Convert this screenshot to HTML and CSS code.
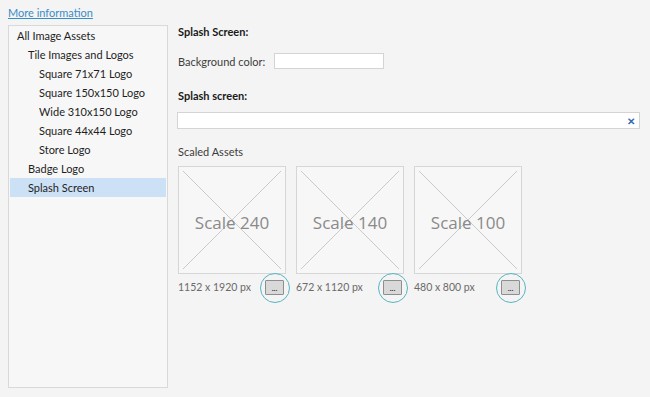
FILE: index.html
```html
<!DOCTYPE html>
<html lang="en">
<head>
    <meta charset="UTF-8">
    <title>Image Assets</title>
    <link rel="stylesheet" href="styles.css">
</head>
<body>
    <a class="moreLink" href="#">More information</a>
    <div class="layout">
        <ul class="tree">
            <li class="lv0">All Image Assets</li>
            <li class="lv1">Tile Images and Logos</li>
            <li class="lv2">Square 71x71 Logo</li>
            <li class="lv2">Square 150x150 Logo</li>
            <li class="lv2">Wide 310x150 Logo</li>
            <li class="lv2">Square 44x44 Logo</li>
            <li class="lv2">Store Logo</li>
            <li class="lv1">Badge Logo</li>
            <li class="lv1 selected">Splash Screen</li>
        </ul>
        <div class="content">
            <p class="heading">Splash Screen:</p>
            <div class="fieldRow">
                <span class="fieldLabel">Background color:</span>
                <span class="colorBox"></span>
            </div>
            <p class="heading second">Splash screen:</p>
            <div class="pathBox"><span class="clear">&#x2715;</span></div>
            <p class="subTitle">Scaled Assets</p>
            <div class="assets">
                <div class="asset">
                    <div class="thumb">
                        <svg class="cross" viewBox="0 0 108 108" preserveAspectRatio="none"><line x1="4" y1="4" x2="104" y2="104"/><line x1="104" y1="4" x2="4" y2="104"/></svg>
                        <span class="scale">Scale 240</span>
                    </div>
                    <div class="assetFoot">
                        <span class="size">1152 x 1920 px</span>
                        <span class="browse">...</span>
                    </div>
                </div>
                <div class="asset">
                    <div class="thumb">
                        <svg class="cross" viewBox="0 0 108 108" preserveAspectRatio="none"><line x1="4" y1="4" x2="104" y2="104"/><line x1="104" y1="4" x2="4" y2="104"/></svg>
                        <span class="scale">Scale 140</span>
                    </div>
                    <div class="assetFoot">
                        <span class="size">672 x 1120 px</span>
                        <span class="browse">...</span>
                    </div>
                </div>
                <div class="asset">
                    <div class="thumb">
                        <svg class="cross" viewBox="0 0 108 108" preserveAspectRatio="none"><line x1="4" y1="4" x2="104" y2="104"/><line x1="104" y1="4" x2="4" y2="104"/></svg>
                        <span class="scale">Scale 100</span>
                    </div>
                    <div class="assetFoot">
                        <span class="size">480 x 800 px</span>
                        <span class="browse">...</span>
                    </div>
                </div>
            </div>
        </div>
    </div>
</body>
</html>
```

FILE: styles.css
```css
* {
    margin: 0;
    padding: 0;
    box-sizing: border-box;
}
ul, ol {list-style: none;}
body {
    width: 650px;
    height: 397px;
    overflow: hidden;
    background-color: #f4f4f4;
    font-family: Lato, "Open Sans", sans-serif;
    font-size: 11px;
    color: #1e1e1e;
    padding: 5px 0 0 8px;
}
.moreLink {
    display: block;
    height: 16px;
    line-height: 16px;
    color: #3a8cc4;
    text-decoration: underline;
    font-size: 11px;
    width: max-content;
}
.layout {
    display: flex;
    margin-top: 4px;
    gap: 10px;
}

/* left tree */
.tree {
    width: 160px;
    height: 363px;
    border: 1px solid #d9d9d9;
    background-color: #f7f7f7;
    padding: 0 1px;
}
.tree > li {
    height: 19px;
    line-height: 19px;
    white-space: nowrap;
}
.tree > li.lv0 { padding-left: 7px; }
.tree > li.lv1 { padding-left: 18px; }
.tree > li.lv2 { padding-left: 29px; }
.tree > li.selected {
    background-color: #cde1f6;
}

/* right side */
.content {
    width: 462px;
}
.heading {
    font-weight: 700;
    height: 14px;
    line-height: 14px;
    color: #1a1a1a;
}
.heading.second {
    margin-top: 20px;
}
.fieldRow {
    display: flex;
    align-items: center;
    margin-top: 14px;
    height: 16px;
}
.fieldLabel {
    width: 96px;
    color: #3c3c3c;
}
.colorBox {
    width: 110px;
    height: 16px;
    background-color: #fff;
    border: 1px solid #d4d4d4;
}
.pathBox {
    margin-top: 9px;
    margin-left: -1px;
    width: 463px;
    height: 17px;
    background-color: #fff;
    border: 1px solid #d4d4d4;
    display: flex;
    justify-content: flex-end;
    align-items: center;
    padding-right: 4px;
}
.clear {
    color: #3769b3;
    font-size: 10px;
    font-weight: 900;
    line-height: 1;
}
.subTitle {
    margin-top: 16px;
    height: 14px;
    line-height: 14px;
    color: #3c3c3c;
}
.assets {
    display: flex;
    gap: 10px;
    margin-top: 7px;
}
.asset {
    width: 108px;
}
.thumb {
    position: relative;
    width: 108px;
    height: 108px;
    border: 1px solid #d6d6d6;
    background-color: #f7f7f7;
    display: flex;
    align-items: center;
    justify-content: center;
}
.cross {
    position: absolute;
    inset: 0;
    width: 100%;
    height: 100%;
}
.cross line {
    stroke: #c9c9c9;
    stroke-width: 1;
}
.scale {
    position: relative;
    font-family: "Open Sans", sans-serif;
    font-size: 17px;
    color: #8a8a8a;
    margin-top: 4px;
}
.assetFoot {
    display: flex;
    justify-content: space-between;
    align-items: center;
    height: 18px;
    margin-top: 4px;
}
.size {
    color: #6a6a6a;
    font-size: 10.5px;
}
.browse {
    position: relative;
    width: 19px;
    height: 15px;
    margin-right: 2px;
    background-color: #d9d9d9;
    border: 1px solid #8e8e8e;
    border-radius: 1px;
    font-size: 8px;
    line-height: 14px;
    text-align: center;
    color: #333;
    font-weight: 700;
}
.browse::after {
    content: "";
    position: absolute;
    left: -6px;
    top: -8px;
    width: 28px;
    height: 28px;
    border: 1.5px solid #56b5c2;
    border-radius: 50%;
}
```
